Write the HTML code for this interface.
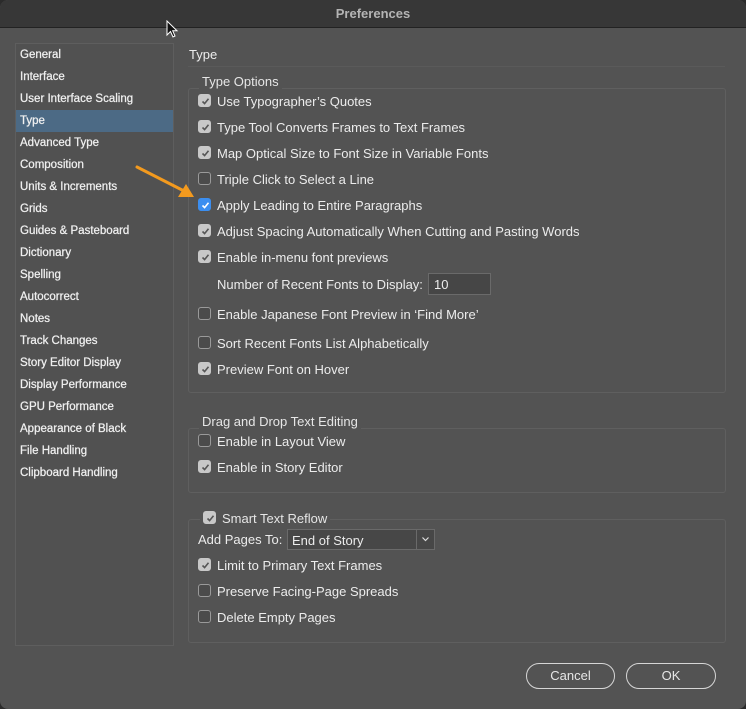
<!DOCTYPE html>
<html><head><style>
*{margin:0;padding:0;box-sizing:border-box}
body{width:746px;height:709px;background:#2b2b2b;overflow:hidden;font-family:"Liberation Sans",sans-serif;color:#e6e6e6}
.win{position:absolute;left:0;top:0;width:746px;height:709px;background:#535353;border-radius:8px;overflow:hidden}
.title{position:absolute;left:0;top:0;width:746px;height:28px;background:#373737;border-bottom:1px solid #222;text-align:center;font-size:13px;font-weight:bold;line-height:28px;color:#b4b4b4}
.side{position:absolute;left:15px;top:43px;width:159px;height:603px;border:1px solid #5e5e5e;background:#515151}
.side div{position:absolute;left:0;width:157px;height:22px;line-height:22px;padding-left:4px;font-size:11.5px;color:#f0f0f0;-webkit-text-stroke:0.25px #f0f0f0}
.side .sel{background:#4c6a85}
.abs{position:absolute;white-space:nowrap}
.t{font-size:13px;line-height:16px;color:#ececec}
.grp{position:absolute;border:1px solid #5f5f5f;border-radius:3px}
.leg{position:absolute;background:#535353;padding:0 3px;font-size:13px;line-height:16px}
.cb{position:absolute;width:13px;height:13px;border-radius:3px;border:1px solid #9a9a9a;background:#4b4b4b}
.cb.on{background:#c8c8c8;border-color:#c8c8c8}
.cb.blue{background:#3b8ef0;border-color:#3b8ef0}
.cb svg{position:absolute;left:1px;top:1px}
.btn{position:absolute;height:26px;border:1.5px solid #d6d6d6;border-radius:13px;text-align:center;line-height:23px;font-size:13px}
</style></head><body>
<div class="win">
<div class="title">Preferences</div>
<svg class="abs" style="left:166px;top:20px" width="14" height="20" viewBox="0 0 14 20"><path d="M1 1 L1 15 L4.5 11.5 L7 17 L9 16 L6.7 10.8 L11 10.8 Z" fill="#111" stroke="#fff" stroke-width="1"/></svg>
<div class="side">
<div style="top:0">General</div>
<div style="top:22px">Interface</div>
<div style="top:44px">User Interface Scaling</div>
<div class="sel" style="top:66px">Type</div>
<div style="top:88px">Advanced Type</div>
<div style="top:110px">Composition</div>
<div style="top:132px">Units &amp; Increments</div>
<div style="top:154px">Grids</div>
<div style="top:176px">Guides &amp; Pasteboard</div>
<div style="top:198px">Dictionary</div>
<div style="top:220px">Spelling</div>
<div style="top:242px">Autocorrect</div>
<div style="top:264px">Notes</div>
<div style="top:286px">Track Changes</div>
<div style="top:308px">Story Editor Display</div>
<div style="top:330px">Display Performance</div>
<div style="top:352px">GPU Performance</div>
<div style="top:374px">Appearance of Black</div>
<div style="top:396px">File Handling</div>
<div style="top:418px">Clipboard Handling</div>
</div>
<div class="abs t" style="left:189px;top:47px">Type</div>
<div class="abs" style="left:188px;top:66px;width:537px;height:1px;background:#5a5a5a"></div>

<div class="grp" style="left:188px;top:88px;width:538px;height:305px"></div>
<div class="leg" style="left:199px;top:74px">Type Options</div>

<div class="grp" style="left:188px;top:428px;width:538px;height:65px"></div>
<div class="leg" style="left:199px;top:414px">Drag and Drop Text Editing</div>

<div class="grp" style="left:188px;top:519px;width:538px;height:124px"></div>
<div class="leg" style="left:200px;top:511px;padding-left:22px">Smart Text Reflow</div>

<div class="abs t" style="left:217px;top:277px">Number of Recent Fonts to Display:</div>
<div class="abs t" style="left:428px;top:273px;width:63px;height:22px;border:1px solid #6a6a6a;background:#464646;padding:3px 0 0 5px">10</div>

<div class="abs t" style="left:198px;top:532px">Add Pages To:</div>
<div class="abs t" style="left:287px;top:529px;width:148px;height:21px;border:1px solid #6a6a6a;background:#474747;padding:3px 0 0 4px">End of Story</div>
<div class="abs" style="left:416px;top:530px;width:1px;height:19px;background:#6a6a6a"></div>
<svg class="abs" style="left:421px;top:536px" width="9" height="6" viewBox="0 0 9 6"><path d="M1.5 1.5 L4.5 4.5 L7.5 1.5" fill="none" stroke="#ddd" stroke-width="1.2"/></svg>

<div id="rows"></div>

<div class="btn" style="left:526px;top:663px;width:89px">Cancel</div>
<div class="btn" style="left:626px;top:663px;width:90px">OK</div>

<svg class="abs" style="left:130px;top:160px" width="70" height="45" viewBox="0 0 70 45"><path d="M7 7 L56 32" stroke="#f39a1e" stroke-width="3" stroke-linecap="round"/><path d="M48 37 L64 37 L56 24 Z" fill="#f39a1e"/></svg>
</div>
<script>
var rows=[
[101,"Use Typographer’s Quotes",1],[127,"Type Tool Converts Frames to Text Frames",1],[153,"Map Optical Size to Font Size in Variable Fonts",1],[179,"Triple Click to Select a Line",0],[205,"Apply Leading to Entire Paragraphs",2],[231,"Adjust Spacing Automatically When Cutting and Pasting Words",1],[257,"Enable in-menu font previews",1],[314,"Enable Japanese Font Preview in ‘Find More’",0],[343,"Sort Recent Fonts List Alphabetically",0],[369,"Preview Font on Hover",1],
[441,"Enable in Layout View",0],[467,"Enable in Story Editor",1],[565,"Limit to Primary Text Frames",1],[591,"Preserve Facing-Page Spreads",0],[617,"Delete Empty Pages",0]];
var h="";
function cb(x,y,s){var c=s==2?"cb blue":(s?"cb on":"cb");var col=s==2?"#fff":"#555";return '<div class="'+c+'" style="left:'+x+'px;top:'+(y-7)+'px">'+(s?'<svg width="11" height="11" viewBox="0 0 11 11"><path d="M2.5 5.5 L4.6 7.6 L8.5 2.8" fill="none" stroke="'+col+'" stroke-width="1.6"/></svg>':'')+'</div>';}
rows.forEach(function(r){h+=cb(198,r[0],r[2])+'<div class="abs t" style="left:217px;top:'+(r[0]-7)+'px">'+r[1]+'</div>';});
h+=cb(203,518,1);
document.getElementById("rows").outerHTML=h;
</script>
</body></html>
